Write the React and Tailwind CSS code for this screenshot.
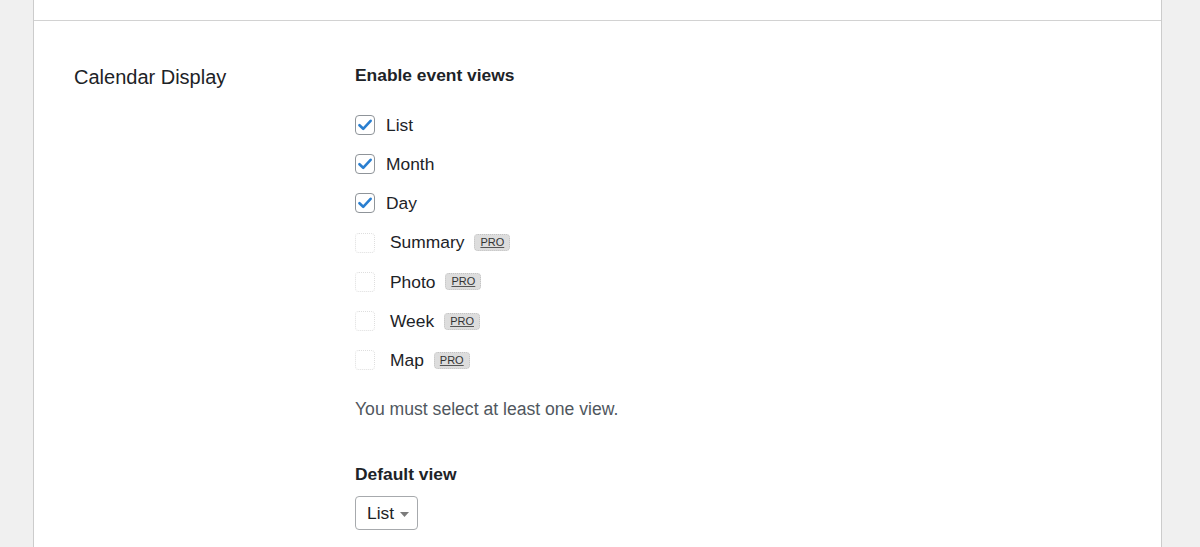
const views = [
  { name: 'List', checked: true },
  { name: 'Month', checked: true },
  { name: 'Day', checked: true },
  { name: 'Summary', pro: true },
  { name: 'Photo', pro: true },
  { name: 'Week', pro: true },
  { name: 'Map', pro: true }
];

function Check() {
  return (
    <svg width="14" height="12" viewBox="0 0 14 12" fill="none">
      <path d="M1.5 6.2 L5.2 9.8 L12.6 1.8" stroke="#2a7fd0" strokeWidth="2.6" strokeLinecap="round" strokeLinejoin="round" />
    </svg>
  );
}

function ViewRow({ view }) {
  return (
    <div className="flex h-[39.3px] items-center">
      {view.checked ? (
        <span className="flex h-[20px] w-[20px] items-center justify-center rounded-[4px] border-[1.5px] border-[#8f9499] bg-white">
          <Check />
        </span>
      ) : (
        <span className="h-[20px] w-[20px] rounded-[4px] border border-dotted border-[#dedede] bg-white" />
      )}
      <span className={view.checked ? 'ml-[11px] text-[17.4px] text-[#1d2327]' : 'ml-[15px] text-[17.4px] text-[#1d2327]'}>{view.name}</span>
      {view.pro && (
        <span className="ml-[10px] flex h-[17px] items-center rounded-[4px] border border-dotted border-[#c4c4c4] bg-[#dddddd] px-[5px] text-[11px] leading-none text-[#333] underline decoration-[#555] underline-offset-[1px]">
          PRO
        </span>
      )}
    </div>
  );
}

export default function App() {
  return (
    <div className="flex min-h-[547px] bg-[#f0f0f0] pl-[33px] pr-[38px] font-['Liberation_Sans',Arial,sans-serif]">
      <div className="flex-1 border-x border-[#cccccc] bg-white">
        <div className="h-[21px] border-b border-[#d2d2d2]" />
        <div className="grid grid-cols-[321px_1fr] pt-[42px]">
          <div className="pl-[40px]">
            <h2 className="text-[20px] leading-[28px] text-[#1d2327]">Calendar Display</h2>
          </div>
          <div>
            <p className="text-[17.4px] font-bold leading-[24px] text-[#1d2327]">Enable event views</p>
            <div className="mt-[18px]">
              {views.map(view => (
                <ViewRow key={view.name} view={view} />
              ))}
            </div>
            <p className="mt-[17px] text-[17.6px] leading-[24px] text-[#50575e]">You must select at least one view.</p>
            <p className="mt-[41px] text-[17.4px] font-bold leading-[24px] text-[#1d2327]">Default view</p>
            <div className="mt-[10px] flex h-[34px] w-[63px] items-center rounded-[4px] border border-[#a7aaad] bg-white pl-[11px]">
              <span className="text-[17.4px] text-[#1d2327]">List</span>
              <svg className="ml-[6px] mt-[3px]" width="9" height="5" viewBox="0 0 9 5">
                <path d="M0 0 L9 0 L4.5 5 Z" fill="#7b7b7b" />
              </svg>
            </div>
          </div>
        </div>
      </div>
    </div>
  );
}
